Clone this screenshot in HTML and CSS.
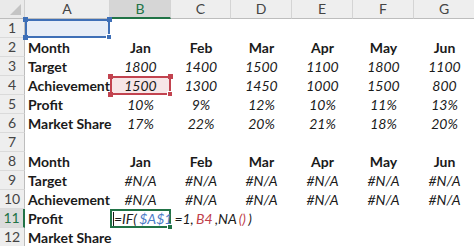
FILE: index.html
```html
<!DOCTYPE html>
<html lang="en">
<head>
  <meta charset="UTF-8">
  <title>Sheet</title>
  <link rel="stylesheet" href="styles.css">
</head>
<body>
  <div class="sheet">
    <!-- column headers -->
    <div class="corner"><span class="tri"></span></div>
    <div class="colhead">A</div>
    <div class="colhead active">B</div>
    <div class="colhead">C</div>
    <div class="colhead">D</div>
    <div class="colhead">E</div>
    <div class="colhead">F</div>
    <div class="colhead">G</div>

    <!-- row 1 -->
    <div class="rowhead">1</div>
    <div class="cell sel-blue"><i class="h tl"></i><i class="h tr"></i><i class="h bl"></i><i class="h br"></i></div>
    <div class="cell"></div><div class="cell"></div><div class="cell"></div><div class="cell"></div><div class="cell"></div><div class="cell"></div>

    <!-- row 2 -->
    <div class="rowhead">2</div>
    <div class="cell label">Month</div>
    <div class="cell hd">Jan</div><div class="cell hd">Feb</div><div class="cell hd">Mar</div><div class="cell hd">Apr</div><div class="cell hd">May</div><div class="cell hd">Jun</div>

    <!-- row 3 -->
    <div class="rowhead">3</div>
    <div class="cell label">Target</div>
    <div class="cell num">1800</div><div class="cell num">1400</div><div class="cell num">1500</div><div class="cell num">1100</div><div class="cell num">1800</div><div class="cell num">1100</div>

    <!-- row 4 -->
    <div class="rowhead">4</div>
    <div class="cell label">Achievement</div>
    <div class="cell num sel-red">1500<i class="h tl"></i><i class="h tr"></i><i class="h bl"></i><i class="h br"></i></div>
    <div class="cell num">1300</div><div class="cell num">1450</div><div class="cell num">1000</div><div class="cell num">1500</div><div class="cell num">800</div>

    <!-- row 5 -->
    <div class="rowhead">5</div>
    <div class="cell label">Profit</div>
    <div class="cell num">10%</div><div class="cell num">9%</div><div class="cell num">12%</div><div class="cell num">10%</div><div class="cell num">11%</div><div class="cell num">13%</div>

    <!-- row 6 -->
    <div class="rowhead">6</div>
    <div class="cell label">Market Share</div>
    <div class="cell num">17%</div><div class="cell num">22%</div><div class="cell num">20%</div><div class="cell num">21%</div><div class="cell num">18%</div><div class="cell num">20%</div>

    <!-- row 7 -->
    <div class="rowhead">7</div>
    <div class="cell"></div><div class="cell"></div><div class="cell"></div><div class="cell"></div><div class="cell"></div><div class="cell"></div><div class="cell"></div>

    <!-- row 8 -->
    <div class="rowhead">8</div>
    <div class="cell label">Month</div>
    <div class="cell hd">Jan</div><div class="cell hd">Feb</div><div class="cell hd">Mar</div><div class="cell hd">Apr</div><div class="cell hd">May</div><div class="cell hd">Jun</div>

    <!-- row 9 -->
    <div class="rowhead">9</div>
    <div class="cell label">Target</div>
    <div class="cell num">#N/A</div><div class="cell num">#N/A</div><div class="cell num">#N/A</div><div class="cell num">#N/A</div><div class="cell num">#N/A</div><div class="cell num">#N/A</div>

    <!-- row 10 -->
    <div class="rowhead">10</div>
    <div class="cell label">Achievement</div>
    <div class="cell num">#N/A</div><div class="cell num">#N/A</div><div class="cell num">#N/A</div><div class="cell num">#N/A</div><div class="cell num">#N/A</div><div class="cell num">#N/A</div>

    <!-- row 11 -->
    <div class="rowhead active-row">11</div>
    <div class="cell label">Profit</div>
    <div class="cell sel-green"><span class="formula"><span class="caret"></span>=IF( <span class="ref-blue">$A$1</span>=1, <span class="ref-red">B4</span> ,NA <span class="ref-red">()</span> )</span><i class="h br"></i></div>
    <div class="cell"></div><div class="cell"></div><div class="cell"></div><div class="cell"></div><div class="cell"></div>

    <!-- row 12 -->
    <div class="rowhead">12</div>
    <div class="cell label">Market Share</div>
    <div class="cell"></div><div class="cell"></div><div class="cell"></div><div class="cell"></div><div class="cell"></div><div class="cell"></div>
  </div>
</body>
</html>
```

FILE: styles.css
```css
* {
  box-sizing: border-box;
  margin: 0;
  padding: 0;
}

body {
  background: white;
  font-family: Lato, "Open Sans", sans-serif;
  color: #1a1a1a;
  overflow: hidden;
}

.sheet {
  display: grid;
  grid-template-columns: 25px 85px 61px 60px 61px 61px 61px 61px;
  grid-template-rows: 19px repeat(12, 19px);
  width: 475px;
}

/* headers */
.corner {
  position: relative;
  background: #eaeaea;
  border-right: 1px solid #cfcfcf;
  border-bottom: 1px solid #bdbdbd;
}

.corner .tri {
  position: absolute;
  right: 3px;
  bottom: 3px;
  width: 0;
  height: 0;
  border-left: 11px solid transparent;
  border-bottom: 11px solid #c4c4c4;
}

.colhead {
  background: #eeeeee;
  border-right: 1px solid #d4d4d4;
  border-bottom: 1px solid #bdbdbd;
  font-size: 14px;
  color: #444;
  text-align: center;
  line-height: 18px;
}

.colhead.active {
  background: #d6d6d6;
  color: #217346;
  border-bottom: 2px solid #217346;
}

.rowhead {
  background: #eeeeee;
  border-right: 1px solid #bdbdbd;
  border-bottom: 1px solid #dadada;
  font-size: 14px;
  color: #444;
  text-align: center;
  line-height: 18px;
}

.rowhead.active-row {
  background: #dcdcdc;
  color: #217346;
  border-right: 2px solid #217346;
}

/* cells */
.cell {
  position: relative;
  font-size: 14px;
  line-height: 19px;
  white-space: nowrap;
}

.label {
  font-weight: 700;
  padding-left: 3px;
}

.hd {
  font-weight: 700;
  text-align: center;
}

.num {
  font-style: italic;
  text-align: center;
}

/* selections */
.sel-blue {
  background: #e7edf7;
  border: 2px solid #3e6fb7;
}

.sel-blue .h {
  background: #3e6fb7;
}

.sel-red {
  background: #f7e6e7;
  border: 2px solid #c2434f;
  line-height: 15px;
}

.sel-red .h {
  background: #c2434f;
}

.sel-green {
  border: 2px solid #217346;
  z-index: 2;
}

.sel-green .h {
  background: #217346;
}

.h {
  position: absolute;
  width: 5px;
  height: 5px;
}

.h.tl { top: -4px; left: -4px; }
.h.tr { top: -4px; right: -4px; }
.h.bl { bottom: -4px; left: -4px; }
.h.br { bottom: -4px; right: -4px; border: 1px solid white; width: 6px; height: 6px; }

.formula {
  position: absolute;
  left: 1px;
  top: 0;
  line-height: 15px;
  font-style: italic;
  word-spacing: -1px;
  color: #1a1a1a;
}

.caret {
  display: inline-block;
  width: 1px;
  height: 14px;
  background: #1a1a1a;
  vertical-align: -2px;
}

.ref-blue {
  color: #4a7cc6;
  padding-right: 2px;
}

.ref-red {
  color: #c0404a;
}
```
